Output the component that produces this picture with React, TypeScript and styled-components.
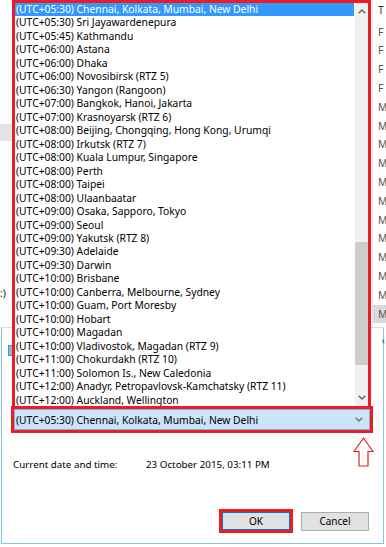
import styled, { createGlobalStyle } from "styled-components";

const GlobalStyle = createGlobalStyle`
  html, body {
    margin: 0;
    padding: 0;
    background: #ffffff;
  }
  body {
    font-family: "Noto Sans", "Open Sans", sans-serif;
    color: #000000;
  }
`;

const RED = "#ed1c24";

const Screen = styled.div`
  position: relative;
  width: 386px;
  height: 547px;
  overflow: hidden;
  background: #ffffff;
  display: flex;
  flex-direction: column;
  font-size: 10.3px;
`;

/* ---------- window behind the dialog ---------- */

const BackWindow = styled.div`
  height: 327px;
  flex: none;
  display: flex;
  justify-content: space-between;
`;

const LeftStrip = styled.div`
  width: 12px;
  display: flex;
  flex-direction: column;
`;

const GrayBand = styled.div`
  margin-top: 124px;
  height: 17px;
  background: #e3e3e3;
`;

const EdgeText = styled.div`
  margin-top: 146px;
  line-height: 12px;
  color: #222;
`;

const RightStrip = styled.div`
  width: 14px;
  display: flex;
  flex-direction: column;
  border-left: 1px solid #e6e6e6;
  box-sizing: border-box;
`;

const StripHeader = styled.div`
  height: 22.6px;
  line-height: 20px;
  padding-left: 5px;
  color: #333;
`;

const StripRow = styled.div<{ $selected?: boolean }>`
  height: 18.8px;
  line-height: 18.8px;
  padding-left: 5px;
  color: #555;
  background: ${(p) => (p.$selected ? "#d9d9d9" : "transparent")};
`;

/* ---------- dialog ---------- */

const Dialog = styled.div`
  margin-left: 1px;
  width: 383px;
  height: 217px;
  flex: none;
  box-sizing: border-box;
  background: #ffffff;
  border: 1px solid #86c6dd;
  border-top-color: #dcdcdc;
  padding: 0 9px;
  display: flex;
  flex-direction: column;
`;

const DialogTop = styled.div`
  height: 78px;
  flex: none;
  display: flex;
  justify-content: space-between;
  align-items: flex-start;
`;

const ZoneIcon = styled.div`
  margin-top: 17px;
  margin-left: -3px;
  width: 6px;
  height: 9px;
  background: #8ab8dc;
  border: 1px solid #5a8fc0;
`;

const SideGlyph = styled.div`
  margin-top: 4px;
  margin-right: -11px;
  color: #555;
  font-size: 11px;
`;

const RedFrame = styled.div`
  border: 3px solid ${RED};
  box-sizing: border-box;
  display: flex;
`;

const ComboFrame = styled(RedFrame)`
  height: 27px;
  width: 362px;
  flex: none;
`;

const Combo = styled.div`
  flex: 1;
  display: flex;
  align-items: center;
  justify-content: space-between;
  background: #cce4f7;
  border: 1px solid #7fb1e0;
  padding: 0 6px 0 1px;
  white-space: nowrap;
`;

const DateSection = styled.div`
  height: 42px;
  flex: none;
  display: flex;
  align-items: flex-end;
  padding: 0 0 3px 2px;
  box-sizing: border-box;
  font-size: 9.8px;
`;

const DateLabel = styled.span`
  width: 133px;
  flex: none;
  line-height: 14px;
`;

const DateValue = styled.span`
  line-height: 14px;
`;

const PointerArrow = styled.svg`
  align-self: flex-start;
  margin-left: auto;
  margin-top: 4px;
`;

const ButtonRow = styled.div`
  margin-top: 34px;
  display: flex;
  justify-content: flex-end;
  align-items: center;
  gap: 8px;
  padding-right: 5px;
  font-size: 10px;
`;

const OkFrame = styled(RedFrame)`
  width: 74px;
  height: 24px;
`;

const Button = styled.div<{ $default?: boolean }>`
  width: 68px;
  height: ${(p) => (p.$default ? "18px" : "19px")};
  box-sizing: border-box;
  background: #e1e1e1;
  border: 1px solid ${(p) => (p.$default ? "#0078d7" : "#adadad")};
  display: flex;
  align-items: center;
  justify-content: center;
`;

/* ---------- open drop-down list ---------- */

const Popup = styled.div`
  position: absolute;
  top: 0;
  left: 12px;
  width: 359px;
  height: 409px;
  box-sizing: border-box;
  border: 3px solid ${RED};
  background: #ffffff;
  display: flex;
  z-index: 2;
`;

const List = styled.div`
  flex: 1;
  overflow: hidden;
  padding-right: 1px;
`;

const Item = styled.div<{ $selected?: boolean }>`
  height: 13.48px;
  line-height: 13.48px;
  padding-left: 1px;
  white-space: nowrap;
  background: ${(p) => (p.$selected ? "#3399ff" : "transparent")};
  color: ${(p) => (p.$selected ? "#ffffff" : "#000000")};
`;

const ScrollBar = styled.div`
  width: 13px;
  flex: none;
  background: #f0f0f0;
  display: flex;
  flex-direction: column;
`;

const ScrollButton = styled.div`
  height: 17px;
  flex: none;
  display: flex;
  align-items: center;
  justify-content: center;
`;

const Track = styled.div`
  flex: 1;
  display: flex;
  flex-direction: column;
`;

const Thumb = styled.div`
  margin-top: 222px;
  height: 123px;
  background: #cdcdcd;
`;

const Chevron = ({ up, color = "#606060" }: { up?: boolean; color?: string }) => (
  <svg width="8" height="5" viewBox="0 0 8 5">
    <polyline
      points={up ? "0.7,4.3 4,1 7.3,4.3" : "0.7,0.7 4,4 7.3,0.7"}
      fill="none"
      stroke={color}
      strokeWidth="1.3"
    />
  </svg>
);

const zones = [
  "(UTC+05:30) Chennai, Kolkata, Mumbai, New Delhi",
  "(UTC+05:30) Sri Jayawardenepura",
  "(UTC+05:45) Kathmandu",
  "(UTC+06:00) Astana",
  "(UTC+06:00) Dhaka",
  "(UTC+06:00) Novosibirsk (RTZ 5)",
  "(UTC+06:30) Yangon (Rangoon)",
  "(UTC+07:00) Bangkok, Hanoi, Jakarta",
  "(UTC+07:00) Krasnoyarsk (RTZ 6)",
  "(UTC+08:00) Beijing, Chongqing, Hong Kong, Urumqi",
  "(UTC+08:00) Irkutsk (RTZ 7)",
  "(UTC+08:00) Kuala Lumpur, Singapore",
  "(UTC+08:00) Perth",
  "(UTC+08:00) Taipei",
  "(UTC+08:00) Ulaanbaatar",
  "(UTC+09:00) Osaka, Sapporo, Tokyo",
  "(UTC+09:00) Seoul",
  "(UTC+09:00) Yakutsk (RTZ 8)",
  "(UTC+09:30) Adelaide",
  "(UTC+09:30) Darwin",
  "(UTC+10:00) Brisbane",
  "(UTC+10:00) Canberra, Melbourne, Sydney",
  "(UTC+10:00) Guam, Port Moresby",
  "(UTC+10:00) Hobart",
  "(UTC+10:00) Magadan",
  "(UTC+10:00) Vladivostok, Magadan (RTZ 9)",
  "(UTC+11:00) Chokurdakh (RTZ 10)",
  "(UTC+11:00) Solomon Is., New Caledonia",
  "(UTC+12:00) Anadyr, Petropavlovsk-Kamchatsky (RTZ 11)",
  "(UTC+12:00) Auckland, Wellington",
];

const stripRows = ["F", "F", "F", "F", "M", "M", "M", "M", "M", "M", "M", "M", "M", "M", "M", "M"];

export default function App() {
  const selected = zones[0];
  return (
    <Screen>
      <GlobalStyle />
      <BackWindow>
        <LeftStrip>
          <GrayBand />
          <EdgeText>:)</EdgeText>
        </LeftStrip>
        <RightStrip>
          <StripHeader>T</StripHeader>
          {stripRows.map((r, i) => (
            <StripRow key={i} $selected={i === stripRows.length - 1}>
              {r}
            </StripRow>
          ))}
        </RightStrip>
      </BackWindow>

      <Dialog>
        <DialogTop>
          <ZoneIcon />
          <SideGlyph>‹</SideGlyph>
        </DialogTop>
        <ComboFrame>
          <Combo>
            <span>{selected}</span>
            <Chevron color="#707070" />
          </Combo>
        </ComboFrame>
        <DateSection>
          <DateLabel>Current date and time:</DateLabel>
          <DateValue>23 October 2015, 03:11 PM</DateValue>
          <PointerArrow width="21" height="30" viewBox="0 0 21 30">
            <polygon
              points="10.5,1 1,14.5 6,14.5 6,29 15,29 15,14.5 20,14.5"
              fill="#ffffff"
              stroke={RED}
              strokeWidth="1.2"
            />
          </PointerArrow>
        </DateSection>
        <ButtonRow>
          <OkFrame>
            <Button $default>OK</Button>
          </OkFrame>
          <Button>Cancel</Button>
        </ButtonRow>
      </Dialog>

      <Popup>
        <List>
          {zones.map((z, i) => (
            <Item key={z} $selected={i === 0}>
              {z}
            </Item>
          ))}
        </List>
        <ScrollBar>
          <ScrollButton>
            <Chevron up />
          </ScrollButton>
          <Track>
            <Thumb />
          </Track>
          <ScrollButton>
            <Chevron />
          </ScrollButton>
        </ScrollBar>
      </Popup>
    </Screen>
  );
}
